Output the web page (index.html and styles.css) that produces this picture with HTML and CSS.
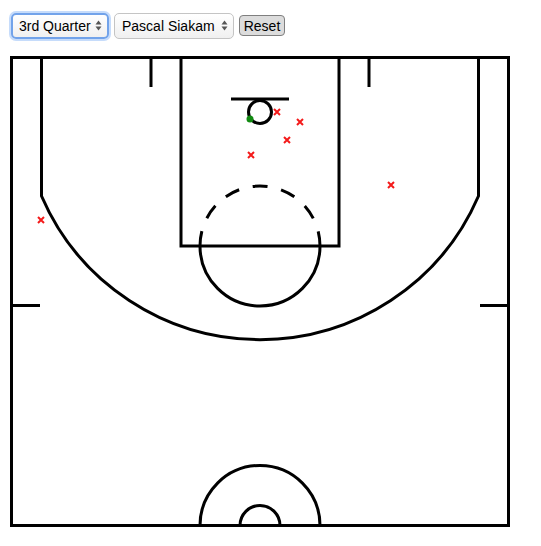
FILE: index.html
```html
<!DOCTYPE html>
<html lang="en">
<head>
  <meta charset="UTF-8">
  <title>Shot Chart</title>
  <link rel="stylesheet" href="styles.css">
</head>
<body>

  <!-- filters: quarter, player, reset -->
  <div class="filters">
    <label class="picker focused">
      <select id="quarter">
        <option>1st Quarter</option>
        <option>2nd Quarter</option>
        <option selected>3rd Quarter</option>
        <option>4th Quarter</option>
      </select>
      <svg class="updown" width="7" height="11" viewBox="0 0 7 11"><path d="M3.5 0.5 L6.5 4.5 L0.5 4.5 Z M0.5 6.5 L6.5 6.5 L3.5 10.5 Z"/></svg>
    </label>
    <label class="picker wide">
      <select id="player">
        <option>Kyle Lowry</option>
        <option selected>Pascal Siakam</option>
        <option>Kawhi Leonard</option>
      </select>
      <svg class="updown" width="7" height="11" viewBox="0 0 7 11"><path d="M3.5 0.5 L6.5 4.5 L0.5 4.5 Z M0.5 6.5 L6.5 6.5 L3.5 10.5 Z"/></svg>
    </label>
    <button class="reset" id="reset">Reset</button>
  </div>

  <!-- half court, 10px per foot -->
  <svg class="court" width="500" height="472" viewBox="0 0 500 472">
    <g class="lines">
      <rect x="1.5" y="1.5" width="497" height="468"/>
      <!-- paint -->
      <rect x="171" y="1.5" width="158" height="188.5"/>
      <!-- baseline hash marks -->
      <line x1="141" y1="1.5" x2="141" y2="31"/>
      <line x1="359" y1="1.5" x2="359" y2="31"/>
      <!-- three point line -->
      <path d="M31.5 1.5 L31.5 140 A238 238 0 0 0 468.5 140 L468.5 1.5"/>
      <!-- free throw circle -->
      <path class="dashed" d="M190 190 A60 60 0 0 1 310 190"/>
      <path d="M190 190 A60 60 0 0 0 310 190"/>
      <!-- side hash marks -->
      <line x1="1.5" y1="249.5" x2="30" y2="249.5"/>
      <line x1="470" y1="249.5" x2="498.5" y2="249.5"/>
      <!-- backboard + rim -->
      <line x1="221" y1="43" x2="279" y2="43"/>
      <circle cx="250" cy="56" r="11.5"/>
      <!-- center court -->
      <path d="M190 469.5 A60 60 0 0 1 310 469.5"/>
      <path d="M230 469.5 A20 20 0 0 1 270 469.5"/>
    </g>

    <g class="shots">
      <circle class="make" cx="240" cy="63" r="3.5"/>
      <path class="miss" d="M264 53 l6 6 m0 -6 l-6 6"/>
      <path class="miss" d="M287 63 l6 6 m0 -6 l-6 6"/>
      <path class="miss" d="M274 81 l6 6 m0 -6 l-6 6"/>
      <path class="miss" d="M238 96 l6 6 m0 -6 l-6 6"/>
      <path class="miss" d="M378 126 l6 6 m0 -6 l-6 6"/>
      <path class="miss" d="M28 161 l6 6 m0 -6 l-6 6"/>
    </g>
  </svg>

</body>
</html>
```

FILE: styles.css
```css
body { margin: 8px; font-family: "Liberation Sans", Arial, sans-serif; color: #000; background: #fff; }

.filters { display: flex; align-items: center; gap: 5px; padding: 4px 0 0 3px; height: 27px; }

.picker { display: inline-flex; align-items: center; box-sizing: border-box; height: 26px; width: 98px; padding: 0 5px 0 7px; border: 1px solid #c4c4c4; border-radius: 5px; background: linear-gradient(#fff, #f0f0f0); }
.picker.wide { width: 120px; }
.picker.focused { border: 2px solid #72a3ea; padding-left: 6px; box-shadow: 0 0 0 2px #c6dcfb; }
.picker select { -webkit-appearance: none; appearance: none; flex: 1; min-width: 0; border: 0; margin: 0; padding: 0; background: transparent; font: 14px "Liberation Sans", Arial, sans-serif; color: #000; outline: none; }
.updown { fill: #555; flex: none; }

.reset { box-sizing: border-box; height: 21px; width: 46px; padding: 0; margin-left: 0; border: 1px solid #7f7f7f; border-radius: 4px; background: #dcdcdc; font: 14px "Liberation Sans", Arial, sans-serif; color: #000; }

.court { display: block; margin: 17px 0 0 2px; }
.lines * { fill: none; stroke: #000; stroke-width: 3; }
.lines .dashed { stroke-dasharray: 15 13.9; }
.make { fill: #118a11; }
.miss { fill: none; stroke: #f41a1a; stroke-width: 2; }
```
